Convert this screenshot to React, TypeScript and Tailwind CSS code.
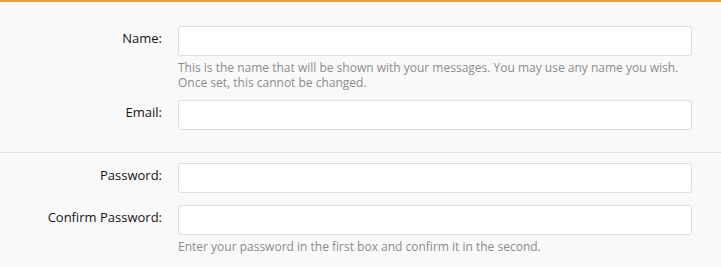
import React from 'react'

interface RowProps {
  label: string
  type?: string
  hint?: React.ReactNode
}

function Row({ label, type = 'text', hint }: RowProps) {
  return (
    <div className="grid grid-cols-[162px_514px] gap-x-4">
      <label className="pt-[3px] text-right text-[13px] leading-[18px] text-[#141414]">{label}</label>
      <div>
        <input
          type={type}
          className="block h-[30px] w-full rounded-[3px] border border-[#dedede] bg-white px-2 text-[13px] outline-none"
        />
        {hint && <p className="mt-[4px] text-[12px] leading-[15px] text-[#8c8c8c]">{hint}</p>}
      </div>
    </div>
  )
}

export default function App() {
  return (
    <div className="min-h-[267px] w-[721px] border-t-2 border-[#d9a24a] bg-[#f9f9f9] font-['Open_Sans',sans-serif]">
      <div className="flex flex-col gap-[10px] pt-[24px] pb-[22px]">
        <Row
          label="Name:"
          hint={
            <>
              This is the name that will be shown with your messages. You may use any name you wish.
              <br />
              Once set, this cannot be changed.
            </>
          }
        />
        <Row label="Email:" type="email" />
      </div>
      <div className="flex flex-col gap-[12px] border-t border-[#e2e2e2] pt-[10px]">
        <Row label="Password:" type="password" />
        <Row
          label="Confirm Password:"
          type="password"
          hint="Enter your password in the first box and confirm it in the second."
        />
      </div>
    </div>
  )
}
